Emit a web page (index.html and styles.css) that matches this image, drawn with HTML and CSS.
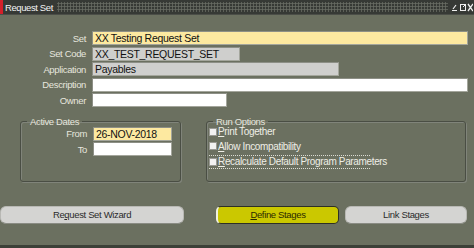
FILE: index.html
```html
<!DOCTYPE html>
<html lang="en">

<head>
    <meta charset="UTF-8">
    <title>Request Set</title>
    <link rel="stylesheet" href="styles.css">
</head>

<body>
    <div class="window">
        <div class="titlebar">
            <span class="app-icon"></span>
            <span class="title">Request Set</span>
            <span class="pattern"></span>
            <span class="win-btns">
                <svg width="22" height="9" viewBox="0 0 22 9">
                    <path d="M1 7.5h5M5 2l-3 4" stroke="#eee" stroke-width="1.2" fill="none"/>
                    <rect x="9.5" y="1.5" width="5" height="6" stroke="#eee" fill="none"/>
                    <path d="M12 4l3-3" stroke="#eee" fill="none"/>
                    <path d="M17 1l5 7M22 1l-5 7" stroke="#eee" stroke-width="1.3" fill="none"/>
                </svg>
            </span>
        </div>

        <div class="form">
            <div class="row">
                <label class="lbl">Set</label>
                <div class="field yellow wide">XX Testing Request Set</div>
            </div>
            <div class="row">
                <label class="lbl">Set Code</label>
                <div class="field grey code">XX_TEST_REQUEST_SET</div>
            </div>
            <div class="row">
                <label class="lbl">Application</label>
                <div class="field grey app">Payables</div>
            </div>
            <div class="row">
                <label class="lbl">Description</label>
                <div class="field white wide"></div>
            </div>
            <div class="row">
                <label class="lbl">Owner</label>
                <div class="field white owner"></div>
            </div>

            <div class="groups">
                <fieldset class="group dates">
                    <legend>Active Dates</legend>
                    <div class="row">
                        <label class="lbl">From</label>
                        <div class="field yellow date">26-NOV-2018</div>
                    </div>
                    <div class="row">
                        <label class="lbl">To</label>
                        <div class="field white date"></div>
                    </div>
                </fieldset>

                <fieldset class="group options">
                    <legend>Run Options</legend>
                    <div class="check"><span class="box"></span><u>P</u>rint Together</div>
                    <div class="check"><span class="box"></span><u>A</u>llow Incompatibility</div>
                    <div class="check focus"><span class="box"></span><u>R</u>ecalculate Default Program Parameters</div>
                </fieldset>
            </div>

            <div class="buttons">
                <button type="button" class="btn wizard">Re<u>q</u>uest Set Wizard</button>
                <button type="button" class="btn define"><u>D</u>efine Stages</button>
                <button type="button" class="btn link">Link Stages</button>
            </div>
        </div>
        <div class="bottom"></div>
    </div>
</body>

</html>
```

FILE: styles.css
```css
body {
    margin: 0;
    background-color: #6b7060;
    font-family: "Liberation Sans", Arial, sans-serif;
}

.window {
    width: 474px;
    height: 248px;
    background-color: #6b7060;
    display: flex;
    flex-direction: column;
}

.titlebar {
    height: 14px;
    display: flex;
    align-items: center;
    background-color: #363935;
    border-bottom: 1px solid #4b4e48;
}

.app-icon {
    width: 3px;
    height: 14px;
    background: #d4202a;
}

.title {
    color: #f4f4f4;
    font-size: 9.5px;
    letter-spacing: -0.4px;
    padding: 0 4px 0 2px;
}

.pattern {
    flex: 1;
    height: 10px;
    background-image: radial-gradient(#666a62 45%, transparent 55%);
    background-size: 3px 3px;
}

.win-btns {
    display: flex;
    padding: 0 1px 0 3px;
}

.form {
    flex: 1;
    padding-top: 16px;
}

.row {
    display: flex;
    align-items: center;
    height: 14px;
    margin-bottom: 1.5px;
}

.lbl {
    width: 86px;
    padding-right: 6px;
    text-align: right;
    color: #e6e6de;
    font-size: 9.5px;
    letter-spacing: -0.35px;
}

.field {
    height: 12px;
    line-height: 12px;
    padding-left: 2px;
    font-size: 10.5px;
    letter-spacing: -0.3px;
    color: #111;
    border: 1px solid #8d8f86;
    border-right-color: #a4a69c;
    border-bottom-color: #a4a69c;
    box-sizing: content-box;
    white-space: nowrap;
}

.yellow {
    background: #fde9a0;
}

.grey {
    background: #cfcfcd;
}

.white {
    background: #ffffff;
}

.wide {
    width: 372px;
}

.code {
    width: 144px;
}

.app {
    width: 243px;
}

.owner {
    width: 131px;
}

.date {
    width: 75px;
}

.groups {
    display: flex;
    padding: 7px 0 0 20px;
    gap: 25px;
}

.group {
    margin: 0;
    padding: 0;
    height: 64px;
    border: 1px solid #4a4e44;
    border-radius: 3px;
    box-shadow: inset 1px 1px 0 #80847a, 1px 1px 0 #80847a;
}

.group legend {
    color: #e6e6de;
    font-size: 9.5px;
    letter-spacing: -0.35px;
    padding: 0 3px;
    margin-left: 6px;
}

.dates {
    width: 159px;
}

.dates .lbl {
    width: 66px;
}

.options {
    width: 258px;
}

.check {
    display: flex;
    align-items: center;
    align-self: flex-start;
    width: 161px;
    height: 12px;
    margin: 1px 0 2.5px 2px;
    color: #eeeee6;
    font-size: 10px;
    letter-spacing: -0.35px;
    white-space: nowrap;
}

.check:first-of-type {
    margin-top: -1px;
}

.box {
    flex: none;
    width: 6px;
    height: 6px;
    background: #f2f2f2;
    border: 1px solid #9a9a94;
    margin-right: 1px;
}

.focus {
    border-top: 1px dotted #dcdcd4;
    border-bottom: 1px dotted #dcdcd4;
}

.buttons {
    display: flex;
    padding-top: 24px;
}

.btn {
    height: 18px;
    padding: 0;
    font-family: "Liberation Sans", Arial, sans-serif;
    font-size: 9.5px;
    letter-spacing: -0.35px;
    color: #2b2b2b;
    border-radius: 6px;
    background: #d4d4d2;
    border: 1px solid #b8b8b4;
    border-bottom-color: #8a8c84;
}

.wizard {
    width: 184px;
    margin-right: 32px;
}

.define {
    width: 123px;
    background: #cbc800;
    border: 1px solid #2e3026;
    border-left: 2px solid #f0f0e0;
    border-radius: 5px;
    color: #2b2a00;
    margin-right: 6px;
}

.link {
    width: 122px;
}

.bottom {
    height: 3px;
    background: #3c4038;
}
```
